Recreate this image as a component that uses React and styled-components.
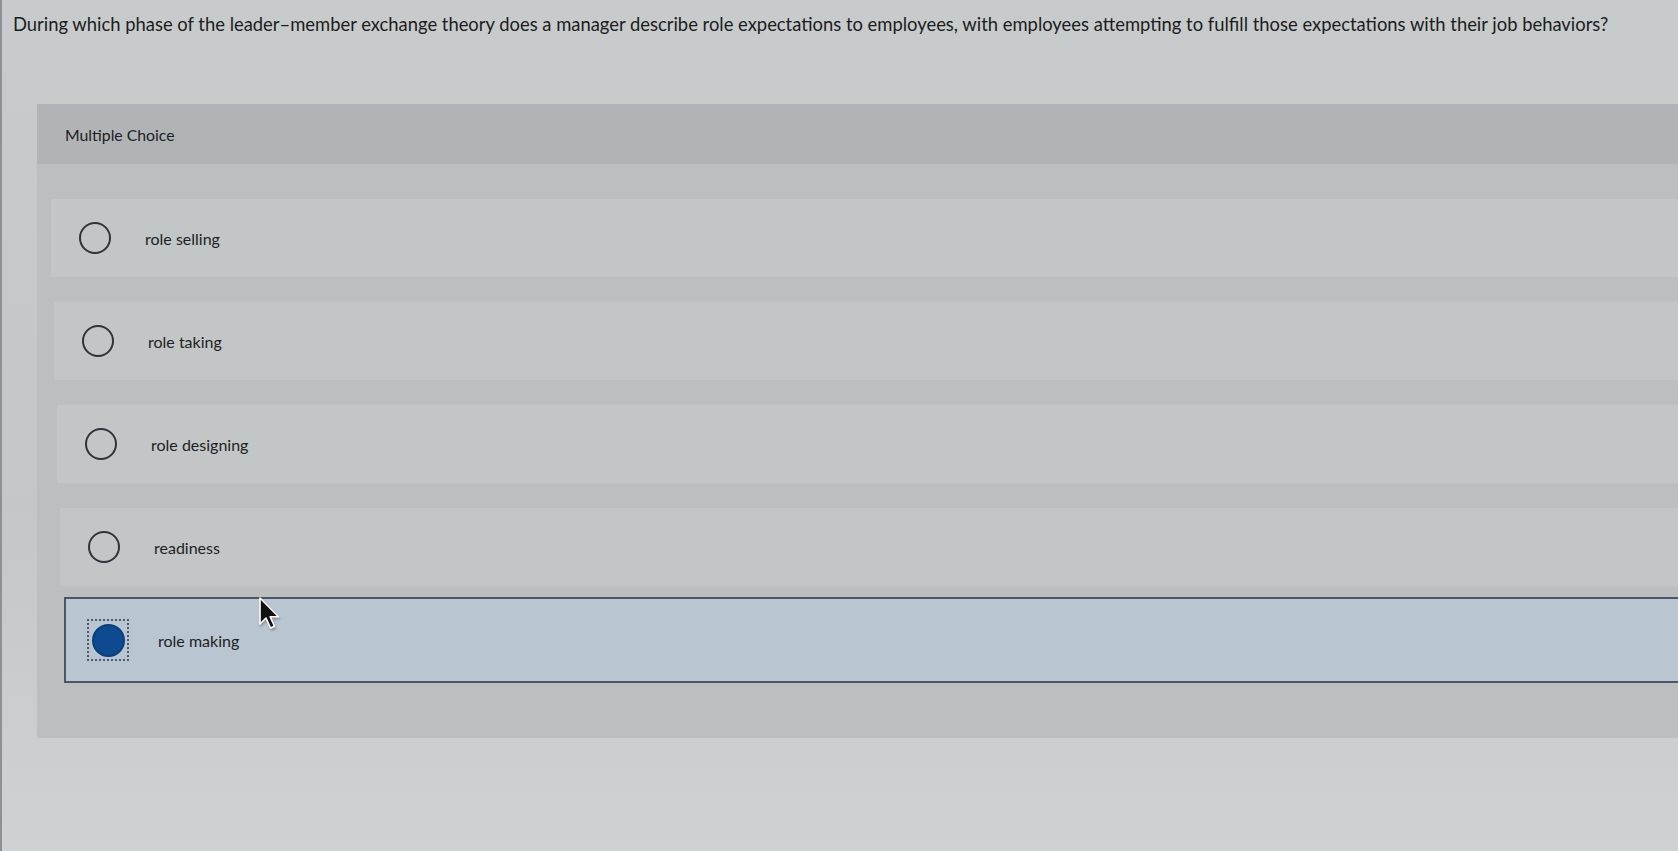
import React from 'react';
import styled, { createGlobalStyle } from 'styled-components';

const GlobalStyle = createGlobalStyle`
	html, body {
		margin: 0;
		padding: 0;
		background: #c9cbcc;
	}
	body {
		font-family: Lato, "Open Sans", "Liberation Sans", sans-serif;
		color: #1d1f22;
	}
`;

const Page = styled.div`
	position: relative;
	width: 1678px;
	height: 851px;
	overflow: hidden;
	border-left: 2px solid #8e9193;
	box-sizing: border-box;
	background: linear-gradient( 180deg, #c8cbcc 0%, #c4c7c8 60%, #cfd2d2 100% );
`;

const Question = styled.p`
	margin: 0;
	padding: 12px 0 0 11px;
	font-size: 18.4px;
	line-height: 25px;
	color: #1b1d20;
`;

const Panel = styled.section`
	margin: 67px 0 0 35px;
	height: 634px;
	background: #bcbfc0;
	display: flex;
	flex-direction: column;
`;

const PanelHeader = styled.div`
	height: 60px;
	display: flex;
	align-items: center;
	padding-left: 28px;
	background: #b1b4b6;
	font-size: 15.8px;
	color: #1e2023;
`;

const OptionList = styled.ul`
	list-style: none;
	margin: 0;
	padding: 35px 0 0;
	display: flex;
	flex-direction: column;
	gap: 25px;
`;

const Option = styled.li`
	margin-left: ${ ( p ) => p.indent }px;
	margin-top: ${ ( p ) => ( p.selected ? '-14px' : '0' ) };
	height: ${ ( p ) => ( p.selected ? 86 : 78 ) }px;
	display: flex;
	align-items: center;
	padding-left: 28px;
	box-sizing: border-box;
	background: ${ ( p ) => ( p.selected ? '#b9c5d0' : '#c3c6c7' ) };
	border: ${ ( p ) => ( p.selected ? '2px solid #4b5668' : 'none' ) };
	border-right: none;
	font-size: 16px;
	color: #1d1f22;
`;

const RadioWrap = styled.span`
	width: 42px;
	height: 42px;
	display: flex;
	align-items: center;
	justify-content: center;
	box-sizing: border-box;
	margin-left: ${ ( p ) => ( p.selected ? '-7px' : '-5px' ) };
	border: ${ ( p ) => ( p.selected ? '2px dotted #4e5a6a' : 'none' ) };
`;

const Radio = styled.span`
	width: ${ ( p ) => ( p.selected ? 33 : 32 ) }px;
	height: ${ ( p ) => ( p.selected ? 33 : 32 ) }px;
	border-radius: 50%;
	box-sizing: border-box;
	border: 2px solid ${ ( p ) => ( p.selected ? '#0b3f7e' : '#30333a' ) };
	background: ${ ( p ) => ( p.selected ? '#0d4a8f' : 'transparent' ) };
`;

const Label = styled.span`
	margin-left: 29px;
`;

const Cursor = styled.svg`
	position: absolute;
	left: 256px;
	top: 596px;
	width: 26px;
	height: 36px;
	filter: drop-shadow( 1px 2px 1px rgba( 0, 0, 0, 0.25 ) );
`;

const options = [
	{ label: 'role selling' },
	{ label: 'role taking' },
	{ label: 'role designing' },
	{ label: 'readiness' },
	{ label: 'role making', selected: true },
];

const App = () => (
	<>
		<GlobalStyle />
		<Page>
			<Question>
				During which phase of the leader–member exchange theory does a manager describe role expectations to employees, with employees attempting to fulfill those expectations with their job behaviors?
			</Question>
			<Panel>
				<PanelHeader>Multiple Choice</PanelHeader>
				<OptionList>
					{ options.map( ( opt, i ) => (
						<Option key={ opt.label } indent={ 14 + i * 3 + ( opt.selected ? 1 : 0 ) } selected={ opt.selected }>
							<RadioWrap selected={ opt.selected }>
								<Radio selected={ opt.selected } />
							</RadioWrap>
							<Label>{ opt.label }</Label>
						</Option>
					) ) }
				</OptionList>
			</Panel>
			<Cursor viewBox="0 0 26 36">
				<path d="M2 2 L2 28 L8 22 L12.5 32 L16.5 30.2 L12.2 20.8 L20.5 20.8 Z" fill="#111" stroke="#fff" strokeWidth="1.6" strokeLinejoin="round" />
			</Cursor>
		</Page>
	</>
);

export default App;
